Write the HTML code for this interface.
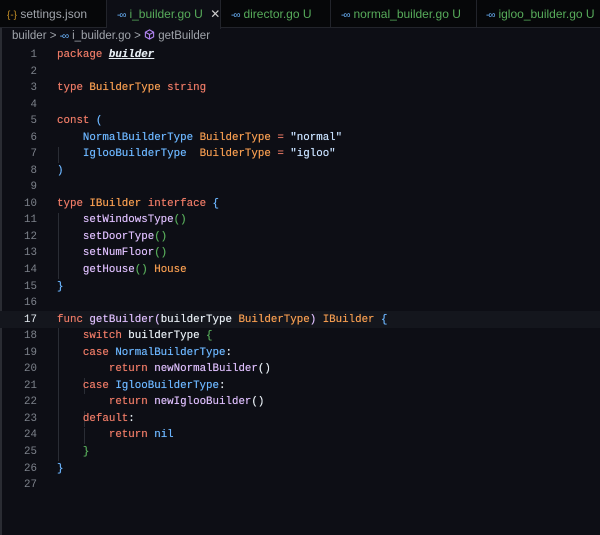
<!DOCTYPE html>
<html><head><meta charset="utf-8"><style>
*{margin:0;padding:0;box-sizing:border-box}
body{width:600px;height:535px;background:#0d0e15;overflow:hidden;font-family:"Liberation Sans",sans-serif;position:relative}
.tabs{position:absolute;left:0;top:0;width:600px;height:28px;background:#060709;border-bottom:1px solid #22242b}
.tab{position:absolute;top:0;height:28px;font-size:12px;line-height:28px;color:#a0a4ab;border-right:1px solid #22242b;white-space:nowrap}
.tab.act{background:#0d0e15;height:29px;color:#57ab5a}
.go{color:#6cb6ff;font-size:10px;letter-spacing:-1px;margin-right:4px}
.g{color:#57ab5a}
.crumb{position:absolute;top:29px;left:12px;font-size:11.5px;color:#a0a4ab;line-height:14px;white-space:nowrap}
.ln{position:absolute;left:0;width:37px;text-align:right;font-family:"Liberation Mono",monospace;font-size:10.8px;color:#7d828b}
.code{position:absolute;left:57px;font-family:"Liberation Mono",monospace;font-size:10.8px;color:#e6edf3;white-space:pre;text-shadow:0 0 0.4px currentColor}
.k{color:#ec7a66}.t{color:#f69d50}.f{color:#dcbdfb}.c{color:#6cb6ff}.s{color:#c8e1ff}.p{color:#57ab5a}.b{color:#6cb6ff}
.cur{position:absolute;left:0;top:311px;width:600px;height:17px;background:#14161d}
.guide{position:absolute;width:1px;background:#2a2d35}
</style></head><body>
<div style="position:absolute;left:0;top:0;width:2px;height:535px;background:#2a2c33"></div>
<div class="tabs">
<div class="tab" style="left:0;width:107px;padding-left:7px"><span style="color:#c69026;font-size:10px">{-}</span> settings.json</div>
<div class="tab act" style="left:107px;width:114px;padding-left:10px"><span class="go">-∞</span>i_builder.go U <span style="color:#ccc;margin-left:4px">✕</span></div>
<div class="tab" style="left:221px;width:110px;padding-left:10px"><span class="go">-∞</span><span class="g">director.go U</span></div>
<div class="tab" style="left:331px;width:146px;padding-left:10px"><span class="go">-∞</span><span class="g">normal_builder.go U</span></div>
<div class="tab" style="left:477px;width:123px;padding-left:9px;border-right:none"><span class="go">-∞</span><span class="g">igloo_builder.go U</span></div>
</div>
<div class="crumb">builder &gt; <span class="go">-∞</span>i_builder.go &gt; <svg width="11" height="11" viewBox="0 0 12 12" style="vertical-align:-1px"><path d="M6 1L10.5 3.5V8.5L6 11L1.5 8.5V3.5Z M1.5 3.5L6 6L10.5 3.5 M6 6V11" fill="none" stroke="#b083f0" stroke-width="1.2"/></svg> getBuilder</div>
<div class="cur"></div>
<div class="guide" style="left:58px;top:147px;height:16px"></div>
<div class="guide" style="left:58px;top:213px;height:66px"></div>
<div class="guide" style="left:58px;top:328px;height:133px"></div>
<div class="guide" style="left:84px;top:378px;height:16px"></div>
<div class="guide" style="left:84px;top:411px;height:16px"></div>
<div class="guide" style="left:84px;top:428px;height:16px"></div>
<div id="c"></div>
<script>
var L=[
'<span class="k">package</span> <i style="text-decoration:underline;font-weight:bold">builder</i>',
'',
'<span class="k">type</span> <span class="t">BuilderType</span> <span class="k">string</span>',
'',
'<span class="k">const</span> <span class="b">(</span>',
'    <span class="c">NormalBuilderType</span> <span class="t">BuilderType</span> <span class="k">=</span> <span class="s">"normal"</span>',
'    <span class="c">IglooBuilderType</span>  <span class="t">BuilderType</span> <span class="k">=</span> <span class="s">"igloo"</span>',
'<span class="b">)</span>',
'',
'<span class="k">type</span> <span class="t">IBuilder</span> <span class="k">interface</span> <span class="b">{</span>',
'    <span class="f">setWindowsType</span><span class="p">()</span>',
'    <span class="f">setDoorType</span><span class="p">()</span>',
'    <span class="f">setNumFloor</span><span class="p">()</span>',
'    <span class="f">getHouse</span><span class="p">()</span> <span class="t">House</span>',
'<span class="b">}</span>',
'',
'<span class="k">func</span> <span class="f">getBuilder</span><span class="f">(</span>builderType <span class="t">BuilderType</span><span class="f">)</span> <span class="t">IBuilder</span> <span class="b">{</span>',
'    <span class="k">switch</span> builderType <span class="p">{</span>',
'    <span class="k">case</span> <span class="c">NormalBuilderType</span>:',
'        <span class="k">return</span> <span class="f">newNormalBuilder</span>()',
'    <span class="k">case</span> <span class="c">IglooBuilderType</span>:',
'        <span class="k">return</span> <span class="f">newIglooBuilder</span>()',
'    <span class="k">default</span>:',
'        <span class="k">return</span> <span class="c">nil</span>',
'    <span class="p">}</span>',
'<span class="b">}</span>',
''];
var h='';
for(var i=0;i<L.length;i++){var y=47+i*16.54;
h+='<div class="ln" style="top:'+y+'px;line-height:16px'+(i==16?';color:#e6edf3':'')+'">'+(i+1)+'</div>';
h+='<div class="code" style="top:'+y+'px;line-height:16px">'+L[i]+'</div>';}
document.getElementById('c').innerHTML=h;
</script>
</body></html>
